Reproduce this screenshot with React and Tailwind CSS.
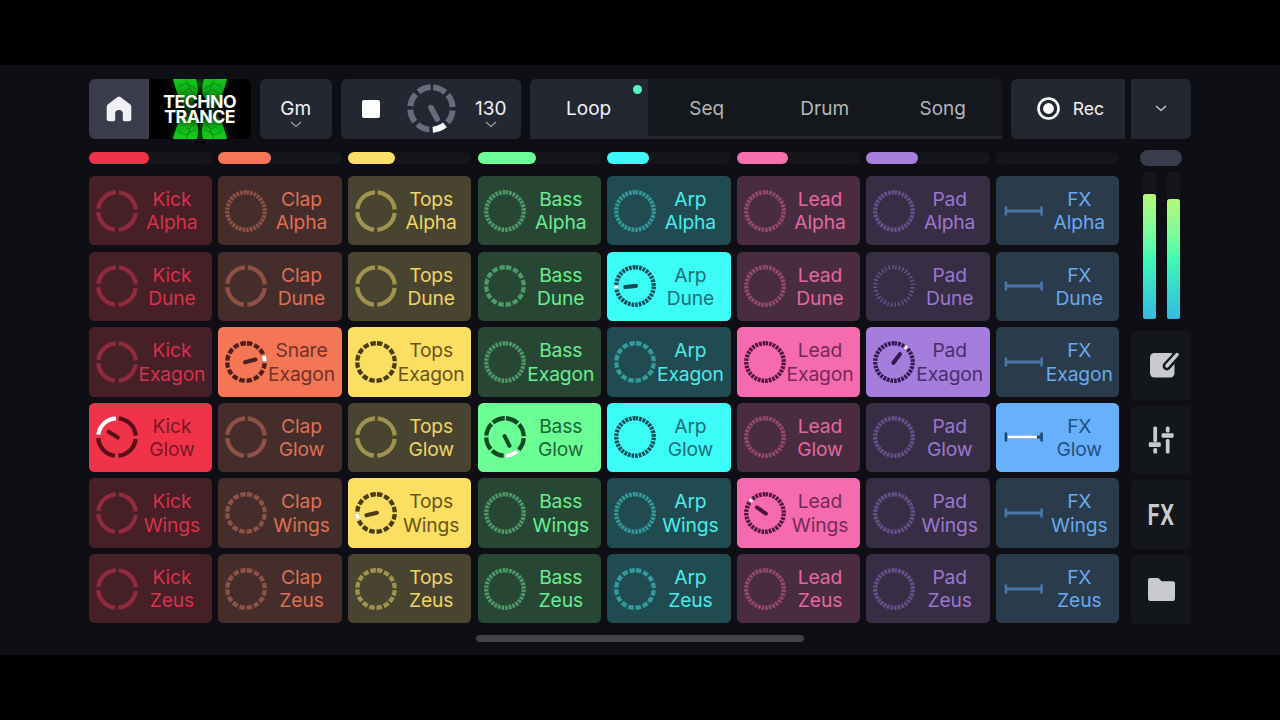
import clsx from 'clsx'

const TRACKS = [
  { name: 'Kick',  level: 60,   fill: 'bg-[#f03349]', dim: 'bg-[#461f27] text-[#d8324c]', lit: 'bg-[#f03349] text-[#7c1625]', ring: '#8f2b3c', dark: '#5c0f19' },
  { name: 'Clap',  level: 53,   fill: 'bg-[#f67757]', dim: 'bg-[#452d2b] text-[#dd7054]', lit: 'bg-[#f47654] text-[#70322a]', ring: '#8f5143', dark: '#4f1f1c' },
  { name: 'Tops',  level: 47,   fill: 'bg-[#fbdf68]', dim: 'bg-[#49442f] text-[#eed565]', lit: 'bg-[#fadf63] text-[#6a5320]', ring: '#a0934f', dark: '#4d3c12' },
  { name: 'Bass',  level: 58.5, fill: 'bg-[#6cfd98]', dim: 'bg-[#274634] text-[#68ee90]', lit: 'bg-[#6cff96] text-[#1d6538]', ring: '#4c9a66', dark: '#0c4a22' },
  { name: 'Arp',   level: 42,   fill: 'bg-[#3cf8f8]', dim: 'bg-[#204b51] text-[#4aebea]', lit: 'bg-[#3cfcf8] text-[#1e6f78]', ring: '#359a9b', dark: '#0e4a55' },
  { name: 'Lead',  level: 51,   fill: 'bg-[#f670b0]', dim: 'bg-[#492c3f] text-[#e267a4]', lit: 'bg-[#f66bb0] text-[#742a55]', ring: '#944872', dark: '#4f1638' },
  { name: 'Pad',   level: 51.5, fill: 'bg-[#a680dc]', dim: 'bg-[#372d45] text-[#9b77ce]', lit: 'bg-[#a47ddd] text-[#4a2e6b]', ring: '#675089', dark: '#32194f' },
  { name: 'FX',    level: 0,    fill: 'bg-[#68b0fc]', dim: 'bg-[#2a3b4b] text-[#68a9ef]', lit: 'bg-[#68b0fc] text-[#20517f]', ring: '#4a76a6', dark: '#1b4a78' },
]

// steps: number of ring segments per track
const SCENES = [
  { name: 'Alpha',  steps: [4, 32, 4, 32, 32, 32, 32] },
  { name: 'Dune',   steps: [4, 4, 4, 16, 32, 32, 32] },
  { name: 'Exagon', steps: [4, 16, 16, 32, 16, 32, 32] },
  { name: 'Glow',   steps: [4, 4, 4, 8, 32, 32, 32] },
  { name: 'Wings',  steps: [4, 16, 16, 32, 32, 32, 32] },
  { name: 'Zeus',   steps: [4, 16, 16, 32, 16, 32, 32] },
]

// playing clips, value is the playhead angle (null = queued without playhead)
const PLAYING = {
  'Arp Dune': 264,
  'Clap Exagon': 75,
  'Tops Exagon': null,
  'Lead Exagon': null,
  'Pad Exagon': 37,
  'Kick Glow': 302,
  'Bass Glow': 153,
  'Arp Glow': null,
  'FX Glow': null,
  'Tops Wings': 257,
  'Lead Wings': 305,
}

const TABS = ['Loop', 'Seq', 'Drum', 'Song']

function ringGap(key, steps) {
  if (key === 'Pad Dune') return 2.1
  if (steps > 16) return 1.05
  return steps > 4 ? 1.9 : 3.6
}

function Ring({ size, radius, width, steps, gap, color, angle, needle }) {
  const c = size / 2
  const r = radius - width / 2
  const len = 2 * Math.PI * r
  const seg = len / steps
  const hasHead = angle !== undefined && angle !== null
  const rad = ((angle || 0) - 90) * Math.PI / 180
  const active = Math.floor((angle || 0) / (360 / steps))
  return (
    <svg width={size} height={size} viewBox={`0 0 ${size} ${size}`} className="shrink-0" fill="none">
      <g transform={`rotate(-90 ${c} ${c})`} strokeWidth={width}>
        <circle cx={c} cy={c} r={r} stroke={color} strokeDasharray={`${seg - gap} ${gap}`} strokeDashoffset={-gap / 2} />
        {hasHead && (
          <circle cx={c} cy={c} r={r} stroke="#fff" strokeDasharray={`${seg - gap} ${len}`} strokeDashoffset={-(gap / 2 + active * seg)} />
        )}
      </g>
      {hasHead && (
        <line
          x1={c - Math.cos(rad)} y1={c - Math.sin(rad)}
          x2={c + Math.cos(rad) * needle} y2={c + Math.sin(rad) * needle}
          stroke={color} strokeWidth={width * 0.95} strokeLinecap="round"
        />
      )}
    </svg>
  )
}

function OneShot({ color, playing }) {
  return (
    <svg width="42" height="42" viewBox="0 0 42 42" className="shrink-0" fill="none" stroke={color}>
      <path d="M2 21H39" strokeWidth="2.8" />
      <path d="M2.9 16.4V25.6M38.6 16.4V25.6" strokeWidth="2.6" />
      {playing && <path d="M4.5 21H34" stroke="#fff" strokeWidth="3" />}
    </svg>
  )
}

function Clip({ track, scene, steps }) {
  const key = `${track.name} ${scene}`
  const playing = key in PLAYING
  const color = playing ? track.dark : track.ring
  return (
    <button className={clsx('flex min-w-0 items-center rounded-[5.5px] pl-[6.9px]', playing ? track.lit : track.dim)}>
      {steps
        ? <Ring size={42} radius={20.9} width={4.3} steps={steps} gap={ringGap(key, steps)} color={color} angle={PLAYING[key]} needle={9.8} />
        : <OneShot color={color} playing={playing} />}
      <span className="-ml-[4.7px] w-[78px] shrink-0 pt-[1.6px] text-center text-[19.3px] leading-[23.5px] tracking-[-0.15px]">
        {key === 'Clap Exagon' ? 'Snare' : track.name}<br />{scene}
      </span>
    </button>
  )
}

function Chevron({ className }) {
  return (
    <svg width="12" height="7" viewBox="0 0 12 7" className={className} fill="none" stroke="currentColor" strokeWidth="1.3">
      <path d="M1 1L6 5.5L11 1" />
    </svg>
  )
}

function Cover() {
  return (
    <div className="relative flex w-[102px] flex-col items-center justify-center overflow-hidden rounded-r-[6px] bg-black">
      <svg className="absolute inset-0" width="102" height="60" viewBox="0 0 102 60">
        <defs>
          <linearGradient id="leaf" x1="0" y1="0" x2="0" y2="1">
            <stop offset="0" stopColor="#14c81e" />
            <stop offset="0.2" stopColor="#0fa818" />
            <stop offset="0.45" stopColor="#053507" />
            <stop offset="0.6" stopColor="#053507" />
            <stop offset="0.8" stopColor="#10b21a" />
            <stop offset="1" stopColor="#15d020" />
          </linearGradient>
          <radialGradient id="haze">
            <stop offset="0" stopColor="#0a7a10" stopOpacity="0.6" />
            <stop offset="1" stopColor="#0a7a10" stopOpacity="0" />
          </radialGradient>
        </defs>
        <ellipse cx="51" cy="5" rx="36" ry="13" fill="url(#haze)" />
        <ellipse cx="51" cy="54" rx="36" ry="14" fill="url(#haze)" />
        <path d="M24 0H47Q50 8 48 16L42 30L48 44Q50 52 48 60H24Q27 46 36 30Q27 14 24 0Z" fill="url(#leaf)" />
        <path d="M78 0H55Q52 8 54 16L60 30L54 44Q52 52 54 60H78Q75 46 66 30Q75 14 78 0Z" fill="url(#leaf)" />
        <g stroke="#067a0e" strokeWidth="0.7" fill="none">
          <path d="M37 0L44 17M29 8L37 4L47 10M32 15L39 10L48 16M65 0L58 17M73 8L65 4L55 10M70 15L63 10L54 16" />
          <path d="M37 60L44 43M29 52L37 56L47 50M32 45L39 50L48 44M65 60L58 43M73 52L65 56L55 50M70 45L63 50L54 44" />
        </g>
      </svg>
      <div className="relative h-[15px] text-[17.7px] leading-[15px] font-bold tracking-[-0.55px] text-white">TECHNO</div>
      <div className="relative h-[15px] text-[17.7px] leading-[15px] font-bold tracking-[-0.55px] text-white">TRANCE</div>
    </div>
  )
}

function TopBar() {
  return (
    <header className="flex h-[60px] text-[19px] text-[#f2f2f5]">
      <button className="flex w-[60px] items-center justify-center rounded-l-[6px] bg-[#383c4b]">
        <svg width="26" height="26" viewBox="0 0 26 26" fill="#f0f0f5">
          <path d="M11.6 1Q13 0 14.4 1L24 8.2Q25.3 9.2 25.3 10.8V23Q25.3 25.3 23 25.3H18.5Q16.8 25.3 16.8 23.6V17.5Q16.8 14 13 14Q9.2 14 9.2 17.5V23.6Q9.2 25.3 7.5 25.3H3Q.7 25.3 .7 23V10.8Q.7 9.2 2 8.2Z" />
        </svg>
      </button>
      <Cover />
      <button className="relative ml-[9px] flex w-[72px] items-center justify-center rounded-[6px] bg-[#232731] pt-[2px]">
        Gm
        <Chevron className="absolute top-[42px] left-[30px] text-[#9a9ca5]" />
      </button>
      <div className="relative ml-[9px] flex w-[180px] items-center rounded-[6px] bg-[#232731]">
        <span className="ml-[21px] size-[18px] rounded-[2px] bg-white" />
        <div className="ml-[26.9px]">
          <Ring size={49} radius={24.2} width={6} steps={8} gap={3.6} color="#686c7c" angle={152} needle={12} />
        </div>
        <span className="ml-[19.5px] pt-[2px]">130</span>
        <Chevron className="absolute top-[42px] left-[144px] text-[#9a9ca5]" />
      </div>
      <nav className="ml-[9px] flex w-[472px]">
        {TABS.map((tab, i) => (
          <button
            key={tab}
            className={clsx(
              'relative flex flex-1 items-center justify-center',
              i === 0 ? 'rounded-tl-[6px] bg-[#232731] pt-[2px]' : 'border-b-[3px] border-[#23252e] bg-[#14171b] pt-[5px] text-[#b5b6ba]',
              i === 3 && 'rounded-tr-[6px]'
            )}
          >
            {tab}
            {i === 0 && <span className="absolute top-[6px] right-[6px] size-[9px] rounded-full bg-[#52f7bd]" />}
          </button>
        ))}
      </nav>
      <button className="ml-[9px] flex w-[114.5px] items-center rounded-l-[6px] bg-[#232731] pl-[26px]">
        <svg width="23" height="23" viewBox="0 0 23 23" fill="none">
          <circle cx="11.5" cy="11.5" r="10" stroke="#fff" strokeWidth="2.6" />
          <circle cx="11.5" cy="11.5" r="5.4" fill="#fff" />
        </svg>
        <span className="ml-[13px] pt-[2px] text-[17.6px]">Rec</span>
      </button>
      <button className="ml-[6px] flex w-[60px] items-center justify-center rounded-r-[6px] bg-[#232731] text-[#d5d6da]">
        <Chevron />
      </button>
    </header>
  )
}

function Meter({ height }) {
  return (
    <div className="flex h-[147.5px] w-[12.5px] items-end rounded-[3px] bg-[#14161a]">
      <div className="w-full rounded-[2.5px] bg-linear-to-b from-[#b4f878] via-[#40fab4] via-50% to-[#38b8dc]" style={{ height }} />
    </div>
  )
}

function SideBar() {
  return (
    <aside className="-mt-[2px] ml-[12px] flex w-[60px] flex-col items-center">
      <div className="h-[15.5px] w-[42px] shrink-0 rounded-full bg-[#383c4b]" />
      <div className="mt-[6px] flex gap-[11.7px]">
        <Meter height={125} />
        <Meter height={120.3} />
      </div>
      <div className="mt-[12px] grid h-[292.5px] w-full grid-rows-4 gap-[6px] text-[#c9cacf] [&>button]:flex [&>button]:items-center [&>button]:justify-center [&>button]:rounded-[5px] [&>button]:bg-[#13161a]">
        <button>
          <svg width="36" height="28" viewBox="0 0 36 28" fill="none" strokeLinecap="round">
            <rect x="7" y="2" width="24.5" height="24.5" rx="4.5" fill="currentColor" />
            <path d="M35.5 2.5L23.8 15.2" stroke="#13161a" strokeWidth="8.4" />
            <path d="M34 3.6L24 14.8" stroke="currentColor" strokeWidth="3.6" />
          </svg>
        </button>
        <button>
          <svg width="26" height="28" viewBox="0 0 26 28" fill="currentColor">
            <rect x="5.3" y=".5" width="3.8" height="15.5" rx="1.5" />
            <rect x=".8" y="16.3" width="12" height="4.6" rx="1.2" />
            <rect x="5.3" y="22" width="3.8" height="5.5" rx="1.5" />
            <rect x="17.8" y=".5" width="3.8" height="6" rx="1.5" />
            <rect x="13.6" y="7.2" width="12" height="4.6" rx="1.2" />
            <rect x="17.8" y="13" width="3.8" height="14.5" rx="1.5" />
          </svg>
        </button>
        <button>
          <span className="scale-x-[0.75] pt-[2px] font-[Roboto] text-[29px] leading-none font-semibold tracking-[1px]">FX</span>
        </button>
        <button>
          <svg width="27" height="23" viewBox="0 0 27 23" fill="currentColor">
            <path d="M2 0H9.5Q10.6 0 11.3 .8L13.5 3.3H24.8Q27 3.3 27 5.3V20.8Q27 23 24.8 23H2.2Q0 23 0 20.8V2Q0 0 2 0Z" />
          </svg>
        </button>
      </div>
    </aside>
  )
}

export default function App() {
  return (
    <div className="h-[720px] w-[1280px] overflow-hidden bg-black py-[65px] font-[Inter,sans-serif]">
      <div className="h-[590px] bg-[#0f0e14] pt-[13.5px] pr-[88.5px] pl-[88.7px]">
        <TopBar />
        <div className="mt-[13.5px] flex">
          <main className="w-[1030.7px]">
            <div className="grid grid-cols-8 gap-x-[6.3px]">
              {TRACKS.map((track) => (
                <div key={track.name} className="h-[12px] rounded-full bg-[#14161a]">
                  <div className={clsx('h-full rounded-full', track.fill)} style={{ width: track.level }} />
                </div>
              ))}
            </div>
            <div className="mt-[12px] grid h-[447.3px] grid-cols-8 grid-rows-6 gap-[6.3px]">
              {SCENES.map((scene) => TRACKS.map((track, i) => (
                <Clip key={track.name + scene.name} track={track} scene={scene.name} steps={scene.steps[i]} />
              )))}
            </div>
          </main>
          <SideBar />
        </div>
        <div className="mt-[11.5px] ml-[387.3px] h-[7px] w-[328.5px] rounded-full bg-[#434347]" />
      </div>
    </div>
  )
}
